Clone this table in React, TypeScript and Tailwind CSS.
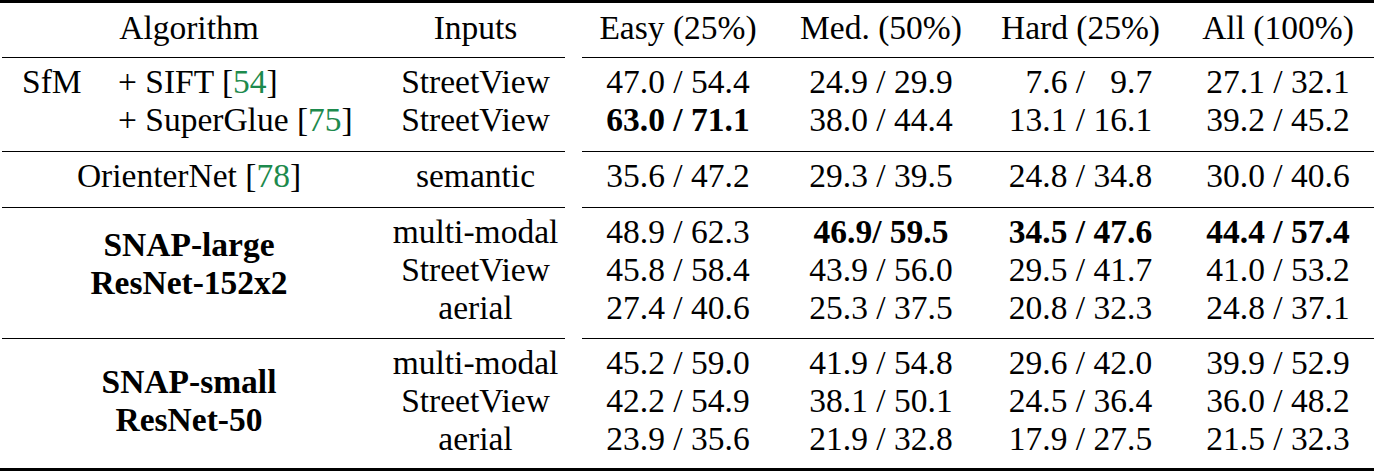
import React from 'react'

type Cell = React.ReactNode

const Cite = ({ n }: { n: string }) => (
    <>
        [<span className="text-[#1d8a4d]">{n}</span>]
    </>
)

const B = ({ children }: { children: React.ReactNode }) => <span className="font-bold">{children}</span>

// phantom digit so the slash lines up like the LaTeX \phantom{0}
const P = () => <span className="invisible">0</span>

function FullRule() {
    return <div className="h-[3px] w-full bg-black" />
}

function SplitRule() {
    return (
        <div className="flex">
            <div className="ml-[2px] h-px w-[563px] bg-black" />
            <div className="ml-[17px] h-px flex-1 bg-black" />
        </div>
    )
}

const rightCols = 'grid grid-cols-[195px_210px_196px_203px_192px] text-center'

interface GroupProps {
    label: React.ReactNode
    rows: Cell[][]
    pb?: string
}

function Group({ label, rows, pb = 'pb-[12px]' }: GroupProps) {
    return (
        <div className={`flex pt-[5px] ${pb}`}>
            <div className="w-[378px] shrink-0">{label}</div>
            <div className="flex flex-col">
                {rows.map((row, i) => (
                    <div key={i} className={rightCols}>
                        {row.map((cell, j) => (
                            <div key={j} className="whitespace-pre">
                                {cell}
                            </div>
                        ))}
                    </div>
                ))}
            </div>
        </div>
    )
}

function SnapLabel({ name, backbone, shift }: { name: string; backbone: string; shift: string }) {
    return (
        <div className={`flex h-full flex-col items-center justify-center font-bold ${shift}`}>
            <div>{name}</div>
            <div>{backbone}</div>
        </div>
    )
}

export default function App() {
    return (
        <div className="w-[1374px] bg-white font-['Liberation_Serif',serif] text-[33.5px] leading-[38px] text-black">
            <FullRule />

            {/* header */}
            <div className="flex pt-[6px] pb-[10px]">
                <div className="w-[378px] shrink-0 text-center">Algorithm</div>
                <div className={rightCols}>
                    <div>Inputs</div>
                    <div>Easy (25%)</div>
                    <div>Med. (50%)</div>
                    <div>Hard (25%)</div>
                    <div>All (100%)</div>
                </div>
            </div>
            <SplitRule />

            <Group
                label={
                    <div className="flex">
                        <div className="w-[118px] shrink-0 pl-[22px]">SfM</div>
                        <div className="flex flex-col whitespace-nowrap">
                            <div>
                                + SIFT <Cite n="54" />
                            </div>
                            <div>
                                + SuperGlue <Cite n="75" />
                            </div>
                        </div>
                    </div>
                }
                rows={[
                    ['StreetView', '47.0 / 54.4', '24.9 / 29.9', <><P />7.6 / <P />9.7</>, '27.1 / 32.1'],
                    ['StreetView', <B>63.0 / 71.1</B>, '38.0 / 44.4', '13.1 / 16.1', '39.2 / 45.2'],
                ]}
            />
            <SplitRule />

            <Group
                label={
                    <div className="text-center">
                        OrienterNet <Cite n="78" />
                    </div>
                }
                rows={[['semantic', '35.6 / 47.2', '29.3 / 39.5', '24.8 / 34.8', '30.0 / 40.6']]}
            />
            <SplitRule />

            <Group
                pb="pb-[11px]"
                label={<SnapLabel name="SNAP-large" backbone="ResNet-152x2" shift="pb-[12px]" />}
                rows={[
                    ['multi-modal', '48.9 / 62.3', <B>46.9/ 59.5</B>, <B>34.5 / 47.6</B>, <B>44.4 / 57.4</B>],
                    ['StreetView', '45.8 / 58.4', '43.9 / 56.0', '29.5 / 41.7', '41.0 / 53.2'],
                    ['aerial', '27.4 / 40.6', '25.3 / 37.5', '20.8 / 32.3', '24.8 / 37.1'],
                ]}
            />
            <SplitRule />

            <Group
                pb="pb-[10px]"
                label={<SnapLabel name="SNAP-small" backbone="ResNet-50" shift="" />}
                rows={[
                    ['multi-modal', '45.2 / 59.0', '41.9 / 54.8', '29.6 / 42.0', '39.9 / 52.9'],
                    ['StreetView', '42.2 / 54.9', '38.1 / 50.1', '24.5 / 36.4', '36.0 / 48.2'],
                    ['aerial', '23.9 / 35.6', '21.9 / 32.8', '17.9 / 27.5', '21.5 / 32.3'],
                ]}
            />
            <FullRule />
        </div>
    )
}
